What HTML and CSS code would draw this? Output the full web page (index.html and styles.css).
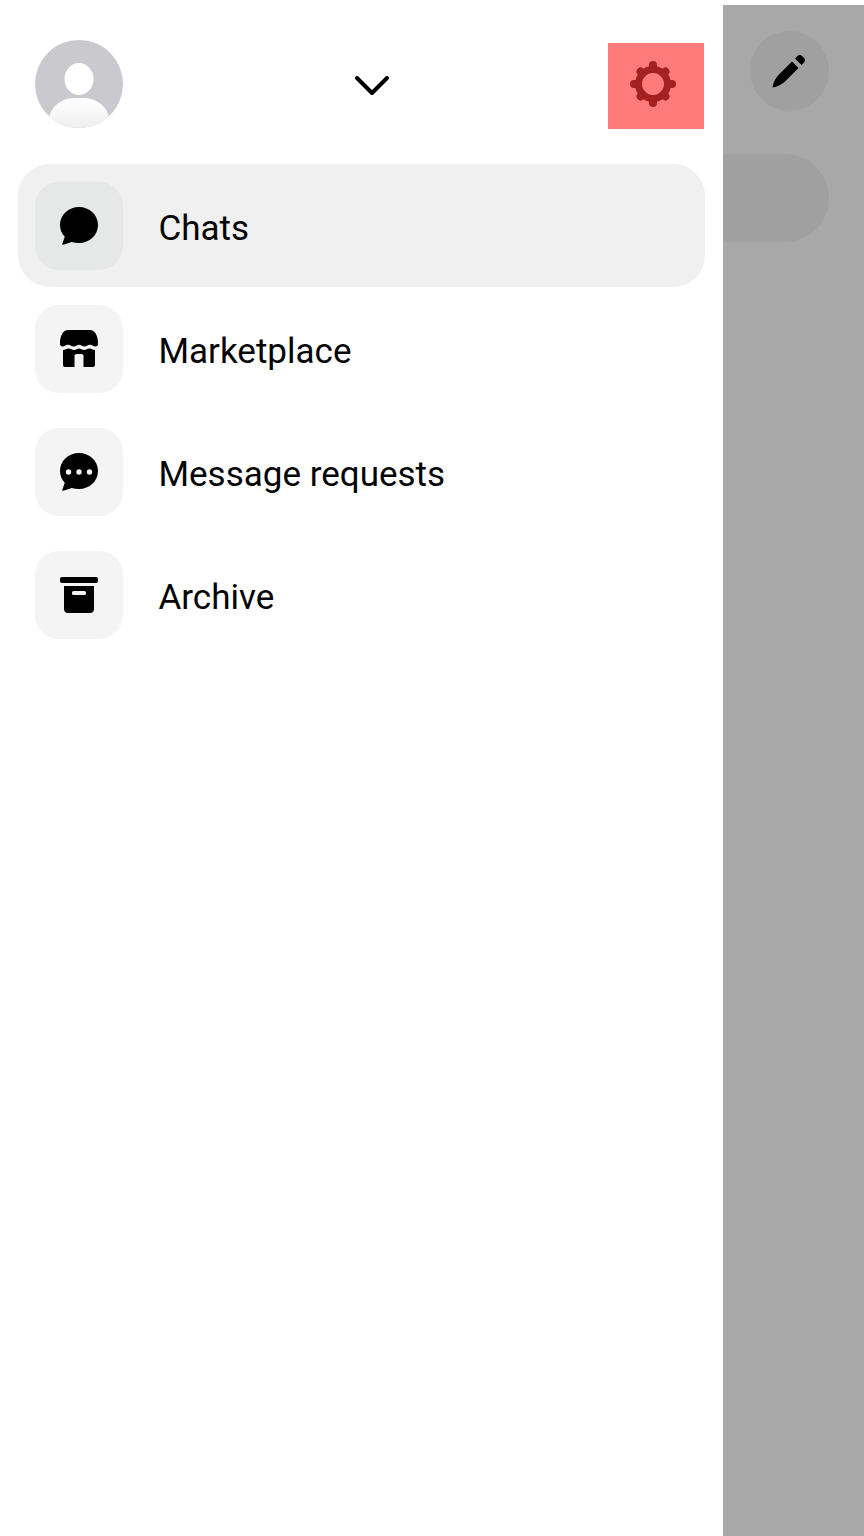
FILE: index.html
```html
<!DOCTYPE html>
<html lang="en">

<head>
  <meta charset="UTF-8">
  <meta name="viewport" content="width=device-width, initial-scale=1.0">
  <title>Menu</title>
  <link rel="stylesheet" href="styles.css">
</head>

<body>
  <div class="drawer">
    <div class="drawer-head">
      <svg class="avatar" width="88" height="88" viewBox="0 0 88 88">
        <defs>
          <clipPath id="avatar-clip">
            <circle cx="44" cy="44" r="44" />
          </clipPath>
          <linearGradient id="avatar-fade" x1="0" y1="0" x2="0" y2="1">
            <stop offset="0" stop-color="#fff" />
            <stop offset="1" stop-color="#efeff0" />
          </linearGradient>
        </defs>
        <circle cx="44" cy="44" r="44" fill="#c9c9ce" />
        <g clip-path="url(#avatar-clip)">
          <ellipse cx="44" cy="39" rx="14.500" ry="16" fill="#fff" />
          <path d="M14 78C16 65 28 58 40 58h8c12 0 24 7 26 20v10H14z" fill="url(#avatar-fade)" />
        </g>
      </svg>

      <svg class="chevron" width="36" height="22" viewBox="0 0 36 22">
        <path d="M3 3l15 15L33 3" fill="none" stroke="#000" stroke-width="4" stroke-linecap="round" stroke-linejoin="round" />
      </svg>

      <div class="settings">
        <svg width="48" height="48" viewBox="0 0 48 48">
          <circle cx="24" cy="24" r="14.500" fill="none" stroke="#a52020" stroke-width="7" />
          <path d="M24 5v3M24 40v3M5 24h3M40 24h3M11.500 11.500l2 2M34.500 34.500l2 2M36.500 11.500l-2 2M13.500 34.500l-2 2" fill="none" stroke="#a52020" stroke-width="8" stroke-linecap="round" />
        </svg>
      </div>
    </div>

    <ul class="menu">
      <li class="menu-item active">
        <span class="tile">
          <svg width="48" height="48" viewBox="0 0 48 48">
            <path d="M24 5C13.500 5 5 12.800 5 23c0 4.600 1.800 8.600 4.800 11.700L7.300 41.700c-.3.800.3 1.300 1.100 1.100l8.300-2.900C19 40.600 21.400 41 24 41c10.500 0 19-7.800 19-18S34.500 5 24 5z" />
          </svg>
        </span>
        <span class="label">Chats</span>
      </li>
      <li class="menu-item">
        <span class="tile">
          <svg width="48" height="48" viewBox="0 0 48 48">
            <path d="M13 5h22c4 0 8 4.500 8 13v1c0 1.500-1 2.500-2.500 2.500-2 0-3-1.800-5.500-1.800s-3.500 1.800-5.500 1.800-3.500-1.800-5.500-1.800-3.500 1.800-5.500 1.800-3-1.800-5.500-1.800-3.500 1.800-5.500 1.800C6 21.500 5 20.500 5 19v-1C5 9.500 9 5 13 5z" />
            <path d="M8 25c2.500 0 3.500-1.500 5.500-1.500s3.500 1.500 5.500 1.500 3.500-1.500 5-1.500 3 1.500 5 1.500 3.500-1.500 5.500-1.500S37.500 25 40 25v15c0 1.200-.8 2-2 2h-9.500V31c0-1.200-.8-2-2-2h-5c-1.200 0-2 .8-2 2v11H10c-1.200 0-2-.8-2-2z" />
          </svg>
        </span>
        <span class="label">Marketplace</span>
      </li>
      <li class="menu-item">
        <span class="tile">
          <svg width="48" height="48" viewBox="0 0 48 48">
            <path d="M24 5C13.500 5 5 12.800 5 23c0 4.600 1.800 8.600 4.800 11.700L7.300 41.700c-.3.800.3 1.300 1.100 1.100l8.300-2.900C19 40.600 21.400 41 24 41c10.500 0 19-7.800 19-18S34.500 5 24 5z" />
            <circle cx="13.500" cy="24" r="2.700" fill="#f4f4f4" />
            <circle cx="24" cy="24" r="2.700" fill="#f4f4f4" />
            <circle cx="34.500" cy="24" r="2.700" fill="#f4f4f4" />
          </svg>
        </span>
        <span class="label">Message requests</span>
      </li>
      <li class="menu-item">
        <span class="tile">
          <svg width="48" height="48" viewBox="0 0 48 48">
            <rect x="5" y="6" width="38" height="6" rx="2" />
            <path d="M9 15h30v23c0 2.500-1.500 4-4 4H13c-2.500 0-4-1.500-4-4z" />
            <rect x="17" y="20" width="14" height="4" rx="1.500" fill="#f4f4f4" />
          </svg>
        </span>
        <span class="label">Archive</span>
      </li>
    </ul>
  </div>

  <div class="backdrop">
    <div class="compose">
      <svg width="40" height="40" viewBox="0 0 40 40">
        <path d="M2.500 36.500c.8-5 3-9.500 6-12.500L22 10.500l6.500 6.500L15 30.500c-3 3-7.500 5.200-12.500 6z" />
        <path d="M25 7.500l2.500-2.500c1.300-1.300 3.300-1.300 4.500 0l2 2c1.300 1.200 1.300 3.200 0 4.500L31.500 14z" />
      </svg>
    </div>
    <div class="search-stub"></div>
  </div>
</body>

</html>
```

FILE: styles.css
```css
html,
body {
  margin: 0;
  height: 100%;
  overflow: hidden;
  background-color: #fff;
}

body {
  display: flex;
  font-family: Roboto, "Liberation Sans", sans-serif;
  color: #050505;
}

.drawer {
  width: 723px;
  flex-shrink: 0;
}

.drawer-head {
  display: flex;
  align-items: center;
  height: 88px;
  padding: 40px 19px 36px 35px;
}

.chevron {
  margin-left: 231px;
  margin-top: 4px;
}

.settings {
  display: flex;
  align-items: center;
  justify-content: center;
  width: 96px;
  height: 86px;
  margin-left: auto;
  margin-top: 4px;
  padding: 0 6px 4px 0;
  box-sizing: border-box;
  background-color: #ff7b7b;
}

.menu {
  margin: 0;
  padding: 0;
  list-style: none;
}

.menu-item {
  display: flex;
  align-items: center;
  height: 123px;
  margin-left: 18px;
  margin-right: 18px;
  padding-left: 17px;
  border-radius: 32px;
}

.menu-item.active {
  background-color: #f0f0f0;
}

.tile {
  display: flex;
  align-items: center;
  justify-content: center;
  width: 88px;
  height: 88px;
  border-radius: 24px;
  background-color: #f4f4f4;
}

.active .tile {
  background-color: #e6e7e7;
}

.label {
  margin-left: 35.500px;
  padding-top: 6px;
  font-size: 35px;
}

.backdrop {
  flex: 1;
  margin-top: 5px;
  background-color: #a8a8a8;
}

.compose {
  display: flex;
  align-items: center;
  justify-content: center;
  width: 79px;
  height: 80px;
  margin: 26px 0 0 27px;
  border-radius: 50%;
  background-color: #a0a0a0;
}

.search-stub {
  width: 106px;
  height: 88px;
  margin-top: 43px;
  border-radius: 0 44px 44px 0;
  background-color: #a0a0a0;
}
```
